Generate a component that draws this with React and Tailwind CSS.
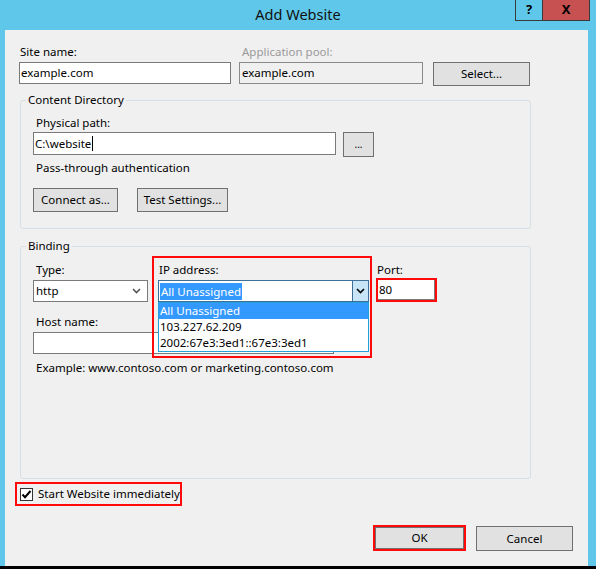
import { useState } from 'react';

const IP_OPTIONS = ['All Unassigned', '103.227.62.209', '2002:67e3:3ed1::67e3:3ed1'];

function Chevron({ className = '' }) {
  return (
    <svg width="9" height="6" viewBox="0 0 9 6" className={className}>
      <path d="M1 1 L4.5 4.5 L8 1" fill="none" stroke="currentColor" strokeWidth="1.6" />
    </svg>
  );
}

function Button({ children, className = '' }) {
  return (
    <button
      type="button"
      className={`flex items-center justify-center border border-[#707070] bg-[#e1e1e1] text-black ${className}`}
    >
      {children}
    </button>
  );
}

function FieldLabel({ children, className = '' }) {
  return <div className={`leading-[16px] whitespace-nowrap ${className}`}>{children}</div>;
}

export default function App() {
  const [startNow, setStartNow] = useState(true);

  return (
    <div className="w-[596px] h-[569px] flex flex-col bg-[#5fc8ea] border-b-[3px] border-black font-['Segoe_UI','Noto_Sans',sans-serif] text-[11.5px] text-black">
      {/* title bar */}
      <div className="relative h-[30px] flex items-center justify-center shrink-0">
        <span className="text-[14.5px] text-[#111]">Add Website</span>
        <div className="absolute top-0 right-[6px] flex h-[21px] border border-t-0 border-[#3a3a3a]">
          <div className="w-[27px] flex items-center justify-center font-bold text-[13px] border-r border-[#3a3a3a]">?</div>
          <div className="w-[46px] flex items-center justify-center bg-[#c75050] font-bold text-[13px]">X</div>
        </div>
      </div>

      <div className="flex-1 ml-[5px] mr-[8px] bg-[#f0f0f0] pl-[14px] pt-[14px] flex flex-col">
        {/* site name / application pool */}
        <div className="flex items-start">
          <div className="w-[212px]">
            <FieldLabel className="h-[18px] pl-[1px]">Site name:</FieldLabel>
            <div className="h-[22px] border border-[#7a7a7a] bg-white px-[1px] leading-[20px]">example.com</div>
          </div>
          <div className="w-[184px] ml-[8px]">
            <FieldLabel className="h-[18px] pl-[3px] text-[#9a9a9a]">Application pool:</FieldLabel>
            <div className="h-[22px] border border-[#8a8a8a] bg-[#f0f0f0] px-[2px] leading-[20px]">example.com</div>
          </div>
          <Button className="ml-[10px] mt-[18px] w-[97px] h-[24px]">Select...</Button>
        </div>

        {/* content directory */}
        <fieldset className="mt-[6px] ml-[1px] w-[511px] border border-[#d5dfe5] rounded-[3px]">
          <legend className="ml-[5px] px-[2px] leading-[16px]">Content Directory</legend>
          <div className="pl-[12px] pt-[7px] pb-[16px]">
            <FieldLabel className="h-[17px] pl-[3px]">Physical path:</FieldLabel>
            <div className="flex items-start">
              <div className="w-[303px] h-[23px] border border-[#7a7a7a] bg-white px-[1px] leading-[21px] flex items-center">
                <span>C:\website</span>
                <span className="ml-[1px] w-[1px] h-[15px] bg-black" />
              </div>
              <Button className="ml-[7px] w-[31px] h-[25px] text-[10px] leading-none pb-[2px]">...</Button>
            </div>
            <FieldLabel className="mt-[3px] pl-[3px]">Pass-through authentication</FieldLabel>
            <div className="mt-[12px] flex">
              <Button className="w-[85px] h-[24px]">Connect as...</Button>
              <Button className="ml-[19px] w-[91px] h-[24px]">Test Settings...</Button>
            </div>
          </div>
        </fieldset>

        {/* binding */}
        <fieldset className="mt-[9px] ml-[1px] w-[511px] border border-[#d5dfe5] rounded-[3px]">
          <legend className="ml-[5px] px-[2px] leading-[16px]">Binding</legend>
          <div className="pl-[12px] pt-[8px] pb-[102px]">
            <div className="flex items-start">
              <div className="w-[115px]">
                <FieldLabel className="h-[18px] pl-[3px]">Type:</FieldLabel>
                <div className="h-[22px] border border-[#7a7a7a] bg-white pl-[2px] pr-[6px] flex items-center justify-between">
                  <span>http</span>
                  <Chevron className="text-[#555]" />
                </div>
              </div>

              <div className="relative w-[220px] ml-[4px] pl-[6px]">
                <FieldLabel className="h-[18px] pl-[1px]">IP address:</FieldLabel>
                <div className="w-[211px] h-[22px] border border-[#3d6f99] bg-white flex">
                  <div className="flex-1 flex items-center pl-[1px]">
                    <span className="bg-[#3399ff] text-white leading-[17px] px-[1px]">All Unassigned</span>
                  </div>
                  <div className="w-[16px] border-l border-[#3d6f99] bg-[#c7e5f6] flex items-center justify-center">
                    <Chevron className="text-black" />
                  </div>
                </div>
                {/* open list of the combo box */}
                <div className="absolute left-[6px] top-[40px] w-[211px] border border-[#26a0da] bg-white z-10">
                  {IP_OPTIONS.map((ip, i) => (
                    <div
                      key={ip}
                      className={`pl-[1px] h-[16px] leading-[16px] whitespace-nowrap ${i === 0 ? 'bg-[#3399ff] text-white' : ''}`}
                    >
                      {ip}
                    </div>
                  ))}
                </div>
                <div className="absolute left-0 -top-[6px] w-[220px] h-[102px] border-2 border-[#ff0a0a] z-20 pointer-events-none" />
              </div>

              <div className="ml-[4px]">
                <FieldLabel className="h-[16px] pl-[1px]">Port:</FieldLabel>
                <div className="w-[61px] h-[24px] border-2 border-[#ff0a0a]">
                  <div className="h-full border-r border-b border-[#7a7a7a] bg-white pl-[1px] leading-[19px]">80</div>
                </div>
              </div>
            </div>

            <FieldLabel className="mt-[12px] h-[18px] pl-[3px]">Host name:</FieldLabel>
            <div className="w-[301px] h-[22px] border border-[#7a7a7a] bg-white" />
            <FieldLabel className="mt-[6px] pl-[3px]">Example: www.contoso.com or marketing.contoso.com</FieldLabel>
          </div>
        </fieldset>

        {/* start now */}
        <div className="mt-[3px] -ml-[4px] w-[167px] h-[24px] border-2 border-[#ff0a0a] flex items-center pl-[3px]">
          <button
            type="button"
            onClick={() => setStartNow(!startNow)}
            className="w-[13px] h-[13px] border border-[#333] bg-white flex items-center justify-center"
          >
            {startNow && (
              <svg width="11" height="11" viewBox="0 0 11 11">
                <path d="M1.5 5.5 L4 8.2 L9.5 2" fill="none" stroke="black" strokeWidth="2" />
              </svg>
            )}
          </button>
          <span className="ml-[5px] leading-[16px] whitespace-nowrap">Start Website immediately</span>
        </div>

        {/* dialog buttons */}
        <div className="mt-[19px] flex justify-end items-start pr-[15px]">
          <div className="w-[93px] h-[26px] border-2 border-[#ff0a0a]">
            <Button className="w-full h-full border-[#5a7d9e]">OK</Button>
          </div>
          <Button className="ml-[10px] mt-[1px] w-[97px] h-[25px]">Cancel</Button>
        </div>
      </div>
    </div>
  );
}
